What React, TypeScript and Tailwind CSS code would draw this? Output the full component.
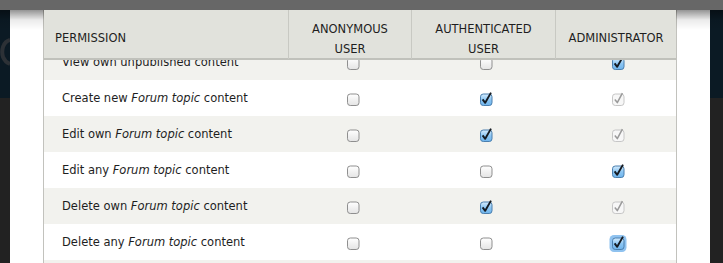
import React from 'react';

type Mark = 'off' | 'on' | 'dim' | 'focus';

interface Row {
  pre: string;
  topic?: boolean;
  post?: string;
  anon: Mark;
  auth: Mark;
  admin: Mark;
  shade: boolean;
}

const rows: Row[] = [
  { pre: 'View own unpublished content', anon: 'off', auth: 'off', admin: 'on', shade: true },
  { pre: 'Create new', topic: true, post: 'content', anon: 'off', auth: 'on', admin: 'dim', shade: false },
  { pre: 'Edit own', topic: true, post: 'content', anon: 'off', auth: 'on', admin: 'dim', shade: true },
  { pre: 'Edit any', topic: true, post: 'content', anon: 'off', auth: 'off', admin: 'on', shade: false },
  { pre: 'Delete own', topic: true, post: 'content', anon: 'off', auth: 'on', admin: 'dim', shade: true },
  { pre: 'Delete any', topic: true, post: 'content', anon: 'off', auth: 'off', admin: 'focus', shade: false },
];

function Check({ mark }: { mark: Mark }) {
  const blue = mark === 'on' || mark === 'focus';
  return (
    <svg width="14" height="14" viewBox="0 0 14 14" className="overflow-visible">
      <defs>
        <linearGradient id="cb-off" x1="0" y1="0" x2="0" y2="1">
          <stop offset="0" stopColor="#ffffff" />
          <stop offset="1" stopColor="#e4e4e4" />
        </linearGradient>
        <linearGradient id="cb-on" x1="0" y1="0" x2="0" y2="1">
          <stop offset="0" stopColor="#d6ecfd" />
          <stop offset="0.5" stopColor="#8cc6f3" />
          <stop offset="1" stopColor="#6fb4ec" />
        </linearGradient>
      </defs>
      {mark === 'focus' && <rect x="-1.5" y="-1" width="17" height="17" rx="4.5" fill="#6aaeea" opacity="0.75" />}
      <rect
        x="1.5"
        y="2"
        width="11.5"
        height="11.5"
        rx="2.8"
        fill={blue ? 'url(#cb-on)' : mark === 'dim' ? '#f7f7f7' : 'url(#cb-off)'}
        stroke={blue ? '#4b7fae' : mark === 'dim' ? '#c6c6c6' : '#8f8f8f'}
        strokeWidth="1"
      />
      {blue && <path d="M3.6 7.4 L6.2 10.8 L12 0.6" stroke="#151b22" strokeWidth="1.9" fill="none" strokeLinejoin="round" />}
      {mark === 'dim' && <path d="M3.8 7.6 L6.3 10.6 L11.4 1.2" stroke="#9a9a9a" strokeWidth="1.5" fill="none" strokeLinejoin="round" />}
    </svg>
  );
}

function Strip({ logo }: { logo?: boolean }) {
  return (
    <div className="flex flex-col h-full">
      <div className="h-[88px] shrink-0 bg-[#0b1a24] overflow-hidden">
        {logo && (
          <svg width="10" height="88" viewBox="0 0 10 88">
            <path d="M10 30 C3 32 1 40 3 47 C5 52 10 54 10 54" stroke="#2c3136" strokeWidth="4" fill="none" />
          </svg>
        )}
      </div>
      <div className="flex-1 bg-[#222222]" />
    </div>
  );
}

export default function App() {
  return (
    <div className="relative w-[723px] h-[263px] overflow-hidden bg-white text-[#1e1e1e] font-['DejaVu_Sans',sans-serif]">
      <div className="h-[10px] bg-[#676767]" />
      <div className="flex h-[253px]">
        <div className="w-[10px]">
          <Strip logo />
        </div>
        <div className="w-[33px]" />

        <div className="w-[634px] border-x border-[#c2c2bd] flex flex-col overflow-hidden">
          {/* header */}
          <div className="relative z-10 shrink-0 grid grid-cols-[244px_123px_144px_121px] h-[50px] bg-[#e1e2dc] border-b-2 border-[#c0c1bb] text-[11.5px] leading-[20px] uppercase">
            <div className="flex items-center pl-[11px] pt-[6px]">Permission</div>
            <div className="flex items-center justify-center text-center border-l border-[#c8c9c3] pt-[9px]">
              Anonymous<br />user
            </div>
            <div className="flex items-center justify-center text-center border-l border-[#c8c9c3] pt-[9px]">
              Authenticated<br />user
            </div>
            <div className="flex items-center justify-center text-center border-l border-[#c8c9c3] pt-[6px]">Administrator</div>
          </div>

          {/* rows */}
          <div className="shrink-0 -mt-[16px]">
            {rows.map((r, i) => (
              <div
                key={i}
                className={`grid grid-cols-[244px_123px_144px_121px] h-[36px] items-center text-[11.5px] ${r.shade ? 'bg-[#f2f2ee]' : 'bg-white'}`}
              >
                <div className="pl-[18px] pt-[2px] whitespace-nowrap">
                  {r.pre}
                  {r.topic && (
                    <>
                      {' '}
                      <em>Forum topic</em> {r.post}
                    </>
                  )}
                </div>
                <div className="flex justify-center pl-[6px] pt-[1px]">
                  <Check mark={r.anon} />
                </div>
                <div className="flex justify-center pl-[6px] pt-[1px]">
                  <Check mark={r.auth} />
                </div>
                <div className="flex justify-center pl-[4px] pt-[1px]">
                  <Check mark={r.admin} />
                </div>
              </div>
            ))}
            <div className="h-[36px] bg-[#f2f2ee]" />
          </div>
        </div>

        <div className="w-[33px]" />
        <div className="w-[13px]">
          <Strip />
        </div>
      </div>

      {/* shadow cast by the top bar */}
      <div className="pointer-events-none absolute left-0 right-0 top-[10px] h-[20px] bg-gradient-to-b from-[rgba(0,0,0,0.42)] via-[rgba(0,0,0,0.08)] to-transparent" />
    </div>
  );
}
